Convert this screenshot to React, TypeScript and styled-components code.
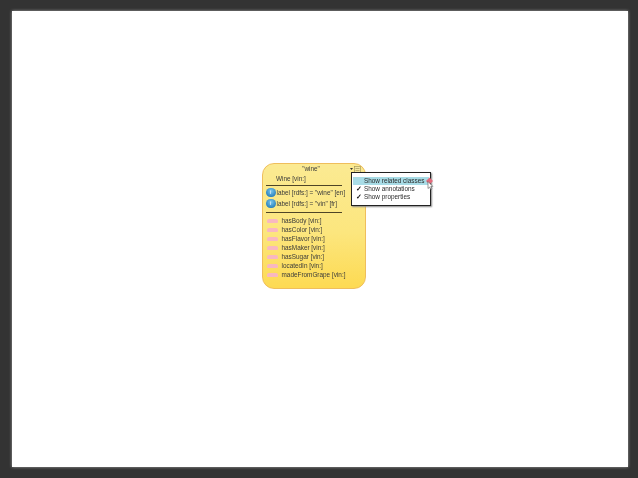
import React from "react";
import styled, { createGlobalStyle } from "styled-components";

const GlobalStyle = createGlobalStyle`
  html, body {
    margin: 0;
    padding: 0;
    background: #333333;
  }
  body {
    font-family: "Liberation Sans", Arial, sans-serif;
  }
`;

const Page = styled.div`
  width: 638px;
  height: 478px;
  box-sizing: border-box;
  padding: 11px 10px 11px 12px;
  background: #333333;
  overflow: hidden;
`;

const Slide = styled.div`
  position: relative;
  width: 616px;
  height: 456px;
  background: #ffffff;
  box-shadow: 0 0 3px #a0a0a0;
`;

const Diagram = styled.div`
  position: absolute;
  left: 250px;
  top: 152px;
  filter: blur(0.35px);
`;

const Node = styled.div`
  width: 104px;
  height: 126px;
  box-sizing: border-box;
  display: flex;
  flex-direction: column;
  padding: 0 3px;
  border: 1px solid #efbe5c;
  border-radius: 12px;
  background: linear-gradient(180deg, #fbea92 0%, #fce67e 55%, #fdda52 100%);
  font-size: 6.4px;
  color: #3a3a3a;
  line-height: 9px;
`;

const Title = styled.div`
  height: 10px;
  padding-right: 6px;
  text-align: center;
`;

const ClassName = styled.div`
  height: 9px;
  padding-left: 10px;
`;

const Divider = styled.div<{ $top: number; $bottom: number }>`
  height: 1px;
  width: 76px;
  margin: ${(p) => p.$top}px 0 ${(p) => p.$bottom}px 0;
  background: #4e4526;
`;

const Annotation = styled.div`
  height: 11px;
  display: flex;
  align-items: center;
  gap: 1px;
`;

const InfoDot = styled.span`
  width: 9.5px;
  height: 9.5px;
  flex: none;
  border-radius: 50%;
  background: radial-gradient(circle at 50% 35%, #7cc8ee, #2a80bc 75%);
  color: #ffffff;
  font-size: 6px;
  line-height: 9.5px;
  text-align: center;
`;

const Property = styled.div`
  height: 9.05px;
  display: flex;
  align-items: center;
  gap: 3.5px;
  padding-left: 1px;
`;

const Tag = styled.span`
  width: 11px;
  height: 4px;
  flex: none;
  border-radius: 2px 2px 1px 1px;
  background: #f8b8c0;
`;

const Toggle = styled.svg`
  position: absolute;
  left: 88px;
  top: 3px;
`;

const Menu = styled.div`
  position: absolute;
  left: 89px;
  top: 9px;
  width: 80px;
  height: 34px;
  box-sizing: border-box;
  padding: 4px 1px 0;
  background: #ffffff;
  border: 1px solid #222222;
  box-shadow: 1px 1px 1.5px #888888;
  font-size: 6.4px;
  color: #2c2c2c;
`;

const MenuItem = styled.div<{ $active?: boolean }>`
  height: 8px;
  line-height: 8px;
  display: flex;
  background: ${(p) => (p.$active ? "#a8dce6" : "transparent")};
`;

const Check = styled.span`
  width: 11px;
  flex: none;
  padding-left: 3px;
  box-sizing: border-box;
  font-size: 6.5px;
  font-weight: bold;
  color: #111111;
`;

const Pointer = styled.svg`
  position: absolute;
  left: 163px;
  top: 14px;
`;

const properties = [
  "hasBody [vin:]",
  "hasColor [vin:]",
  "hasFlavor [vin:]",
  "hasMaker [vin:]",
  "hasSugar [vin:]",
  "locatedIn [vin:]",
  "madeFromGrape [vin:]",
];

export default function App() {
  return (
    <Page>
      <GlobalStyle />
      <Slide>
        <Diagram>
          <Node>
            <Title>"wine"</Title>
            <ClassName>Wine [vin:]</ClassName>
            <Divider $top={2} $bottom={1} />
            <Annotation>
              <InfoDot>i</InfoDot>
              label [rdfs:] = "wine" [en]
            </Annotation>
            <Annotation>
              <InfoDot>i</InfoDot>
              label [rdfs:] = "vin" [fr]
            </Annotation>
            <Divider $top={3} $bottom={3} />
            {properties.map((name) => (
              <Property key={name}>
                <Tag />
                {name}
              </Property>
            ))}
          </Node>
          <Toggle width="14" height="7" viewBox="0 0 14 7">
            <path d="M0 2h3l-1.5 2z" fill="#333333" />
            <rect x="4.5" y="0.5" width="6" height="6" fill="#f3e7a0" stroke="#a89a5a" strokeWidth="0.7" />
            <path d="M5.5 2.5h4M5.5 4.5h4" stroke="#a89a5a" strokeWidth="0.7" />
          </Toggle>
          <Menu>
            <MenuItem $active>
              <Check />
              Show related classes
            </MenuItem>
            <MenuItem>
              <Check>✓</Check>
              Show annotations
            </MenuItem>
            <MenuItem>
              <Check>✓</Check>
              Show properties
            </MenuItem>
          </Menu>
          <Pointer width="9" height="13" viewBox="0 0 9 13">
            <path d="M1 4l3.5-3.5 3.5 3.5-3.5 3.5z" fill="#e46a7c" />
            <path d="M3 4.5l0 7 1.6-1.4 1.2 2.4 1.2-.6-1.2-2.3 2-.2z" fill="#ffffff" stroke="#555555" strokeWidth="0.6" />
          </Pointer>
        </Diagram>
      </Slide>
    </Page>
  );
}
